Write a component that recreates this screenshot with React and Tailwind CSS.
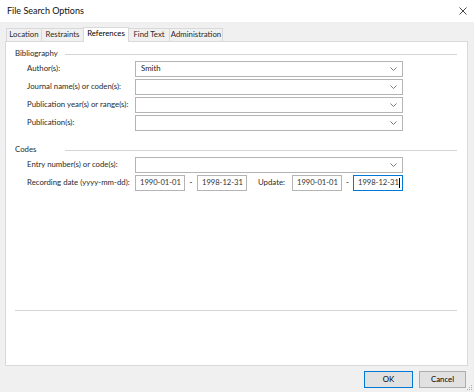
import React from 'react'

const font = { fontFamily: 'Lato, "Liberation Sans", Arial, sans-serif' }

function Chevron() {
  return (
    <svg width="7" height="4" viewBox="0 0 7 4" className="shrink-0">
      <path d="M0.5 0.5 L3.5 3.5 L6.5 0.5" fill="none" stroke="#707070" strokeWidth="0.9" />
    </svg>
  )
}

function Combo({ value = '' }) {
  return (
    <div className="w-[268px] h-[16px] border border-[#b4b4b4] bg-white flex items-center justify-between pl-[5px] pr-[5px]">
      <span className="leading-none text-[#222]">{value}</span>
      <Chevron />
    </div>
  )
}

function DateBox({ value, focused }) {
  return (
    <div
      className={`w-[50px] h-[16px] bg-white flex items-center pl-[4px] whitespace-nowrap overflow-hidden shrink-0 ${
        focused ? 'border border-[#0078d7]' : 'border border-[#b4b4b4]'
      }`}
    >
      <span className="leading-none text-[#333] text-[7.6px]">{value}</span>
      {focused && <span className="w-px h-[10px] bg-black" />}
    </div>
  )
}

function Row({ label, children }) {
  return (
    <div className="flex items-center h-[16px]">
      <div className="w-[129px] shrink-0 pl-[21px] text-[#2a2a2a] whitespace-nowrap leading-none">{label}</div>
      {children}
    </div>
  )
}

function GroupHeader({ title }) {
  return (
    <div className="flex items-center h-[14px] pl-[9px] pr-[10px]">
      <span className="w-[50px] shrink-0 text-[#2a2a2a] leading-none">{title}</span>
      <div className="flex-1 h-px bg-[#d5d5d5]" />
    </div>
  )
}

export default function App() {
  const tabs = [
    { name: 'Location', w: 'w-[36px]' },
    { name: 'Restraints', w: 'w-[43px]' },
    { name: 'References', w: 'w-[46px]' },
    { name: 'Find Text', w: 'w-[42px]' },
    { name: 'Administration', w: 'w-[54px]' },
  ]

  return (
    <div className="w-[474px] h-[392px] bg-[#f0f0f0] flex flex-col text-[7.8px] text-black overflow-hidden" style={font}>
      {/* Title bar */}
      <div className="h-[22px] bg-white flex items-center justify-between pl-[7px] pr-[7px] shrink-0">
        <span className="text-[9px] text-[#111]">File Search Options</span>
        <svg width="8" height="8" viewBox="0 0 8 8">
          <path d="M0.5 0.5 L7.5 7.5 M7.5 0.5 L0.5 7.5" stroke="#333" strokeWidth="0.9" />
        </svg>
      </div>

      {/* Tabs */}
      <div className="flex items-end pl-[6px] h-[19px] shrink-0">
        {tabs.map((t, i) =>
          t.name === 'References' ? (
            <div key={t.name} className={`${t.w} h-[15px] -ml-px bg-white border border-b-0 border-[#d9d9d9] flex items-center justify-center -mb-px relative z-10 pb-[2px] whitespace-nowrap`}>
              {t.name}
            </div>
          ) : (
            <div key={t.name} className={`${t.w} h-[13px] border border-b-0 border-[#d9d9d9] ${i === 0 ? '' : '-ml-px'} flex items-center justify-center text-[#2a2a2a] whitespace-nowrap`}>
              {t.name}
            </div>
          )
        )}
      </div>

      {/* Panel */}
      <div className="ml-[5px] w-[463px] h-[325px] bg-white border border-[#d9d9d9] flex flex-col pt-[5px] shrink-0">
        <GroupHeader title="Bibliography" />
        <div className="flex flex-col gap-[2px]">
          <Row label="Author(s):"><Combo value="Smith" /></Row>
          <Row label="Journal name(s) or coden(s):"><Combo /></Row>
          <Row label="Publication year(s) or range(s):"><Combo /></Row>
          <Row label="Publication(s):"><Combo /></Row>
        </div>

        <div className="mt-[12px]">
          <GroupHeader title="Codes" />
        </div>
        <div className="flex flex-col gap-[2px]">
          <Row label="Entry number(s) or code(s):"><Combo /></Row>
          <Row label="Recording date (yyyy-mm-dd):">
            <DateBox value="1990-01-01" />
            <span className="w-[12px] text-center">-</span>
            <DateBox value="1998-12-31" />
            <span className="w-[45px] pl-[11px] text-[#2a2a2a]">Update:</span>
            <DateBox value="1990-01-01" />
            <span className="w-[11px] text-center">-</span>
            <DateBox value="1998-12-31" focused />
          </Row>
        </div>

        <div className="mt-auto mb-[54px] ml-[9px] mr-[10px] h-px bg-[#d5d5d5]" />
      </div>

      {/* Footer */}
      <div className="flex-1 flex items-start justify-end gap-[6px] pr-[8px] pt-[5px] relative">
        <button className="w-[49px] h-[17px] bg-[#e1e1e1] border border-[#0078d7] flex items-center justify-center leading-none">
          OK
        </button>
        <button className="w-[47px] h-[17px] bg-[#e1e1e1] border border-[#adadad] flex items-center justify-center leading-none">
          Cancel
        </button>
        {/* resize grip */}
        <svg width="6" height="6" viewBox="0 0 6 6" className="absolute right-[1px] bottom-[1px]">
          <rect x="4" y="0" width="1" height="1" fill="#b0b0b0" />
          <rect x="2" y="2" width="1" height="1" fill="#b0b0b0" />
          <rect x="4" y="2" width="1" height="1" fill="#b0b0b0" />
          <rect x="0" y="4" width="1" height="1" fill="#b0b0b0" />
          <rect x="2" y="4" width="1" height="1" fill="#b0b0b0" />
          <rect x="4" y="4" width="1" height="1" fill="#b0b0b0" />
        </svg>
      </div>
    </div>
  )
}
